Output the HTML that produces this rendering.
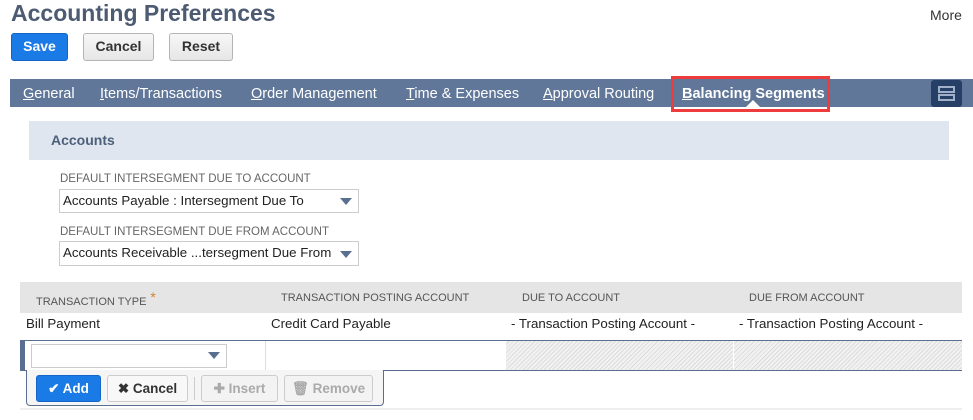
<!DOCTYPE html>
<html><head><style>
*{box-sizing:border-box;margin:0;padding:0}
body{width:973px;height:420px;background:#fff;font-family:"Liberation Sans",sans-serif;position:relative;overflow:hidden;color:#333}
.a{position:absolute;white-space:nowrap}
.btn{position:absolute;border:1px solid #b4b4b4;border-radius:3px;background:linear-gradient(#f7f7f7,#e6e6e6);font-size:14px;font-weight:bold;color:#333;text-align:center;line-height:25px}
.tab{position:absolute;top:86px;font-size:14.5px;color:#fff}
.tab u{text-decoration:underline}
.lbl{position:absolute;font-size:11.5px;color:#666}
.sel{position:absolute;border:1px solid #ccc;background:#fff;font-size:13.3px;color:#222;padding-left:3px;line-height:21px}
.tri{position:absolute;width:0;height:0;border-left:6px solid transparent;border-right:6px solid transparent;border-top:7px solid #5a6f90}
.th{position:absolute;top:292px;font-size:11px;color:#555}
.td{position:absolute;top:316px;font-size:13.3px;color:#222}
.hatch{background:repeating-linear-gradient(135deg,#f2f2f2 0 2px,#dcdcdc 2px 3px)}
.sb{position:absolute;top:375px;height:27px;border:1px solid #ccc;border-radius:3px;background:#f3f3f3;font-size:13.5px;font-weight:bold;line-height:25px;text-align:center}
</style></head><body>
<div class="a" style="left:11px;top:0;font-size:23px;font-weight:bold;color:#4d5b72">Accounting Preferences</div>
<div class="a" style="left:930px;top:7px;font-size:14px;color:#333">More</div>
<div class="btn" style="left:11px;top:33px;width:57px;height:28px;background:#1a7ae6;border-color:#1565c8;color:#fff">Save</div>
<div class="btn" style="left:83px;top:33px;width:71px;height:28px">Cancel</div>
<div class="btn" style="left:169px;top:33px;width:64px;height:28px">Reset</div>
<div class="a" style="left:10px;top:79px;width:963px;height:28px;background:#607799"></div>
<div class="tab" style="left:23px"><u>G</u>eneral</div>
<div class="tab" style="left:100px"><u>I</u>tems/Transactions</div>
<div class="tab" style="left:251px"><u>O</u>rder Management</div>
<div class="tab" style="left:406px"><u>T</u>ime &amp; Expenses</div>
<div class="tab" style="left:543px"><u>A</u>pproval Routing</div>
<div class="tab" style="left:682px;font-weight:bold"><u>B</u>alancing Segments</div>
<div class="a" style="left:746px;top:100px;width:0;height:0;border-left:7px solid transparent;border-right:7px solid transparent;border-bottom:7px solid #fff"></div>
<div class="a" style="left:671px;top:76px;width:159px;height:36px;border:3px solid #ee3b3b"></div>
<div class="a" style="left:931px;top:80px;width:31px;height:27px;background:#263f66;border-radius:3px"></div>
<div class="a" style="left:938px;top:86px;width:17px;height:7px;border:2px solid #9fb0c8"></div>
<div class="a" style="left:938px;top:94px;width:17px;height:7px;border:2px solid #9fb0c8"></div>
<div class="a" style="left:29px;top:121px;width:920px;height:39px;background:#dfe6ef"></div>
<div class="a" style="left:51px;top:132px;font-size:14px;font-weight:bold;color:#4d5f7a">Accounts</div>
<div class="lbl" style="left:60px;top:173px">DEFAULT INTERSEGMENT DUE TO ACCOUNT</div>
<div class="sel" style="left:59px;top:189px;width:300px;height:24px">Accounts Payable : Intersegment Due To</div>
<div class="tri" style="left:340px;top:198px"></div>
<div class="lbl" style="left:60px;top:226px">DEFAULT INTERSEGMENT DUE FROM ACCOUNT</div>
<div class="sel" style="left:59px;top:241px;width:300px;height:25px">Accounts Receivable ...tersegment Due From</div>
<div class="tri" style="left:340px;top:251px"></div>
<div class="a" style="left:20px;top:282px;width:942px;height:31px;background:#e5e5e5"></div>
<div class="th" style="left:36px">TRANSACTION TYPE<span style="color:#d9822b;font-size:14px;position:relative;top:-3px"> *</span></div>
<div class="th" style="left:281px">TRANSACTION POSTING ACCOUNT</div>
<div class="th" style="left:522px">DUE TO ACCOUNT</div>
<div class="th" style="left:749px">DUE FROM ACCOUNT</div>
<div class="td" style="left:26px">Bill Payment</div>
<div class="td" style="left:271px">Credit Card Payable</div>
<div class="td" style="left:511px">- Transaction Posting Account -</div>
<div class="td" style="left:739px">- Transaction Posting Account -</div>
<div class="a" style="left:20px;top:340px;width:942px;height:31px;border-top:1px solid #5a6f90;border-bottom:1px solid #5a6f90;border-left:5px solid #5a6f90"></div>
<div class="a" style="left:265px;top:341px;width:1px;height:29px;background:#ddd"></div>
<div class="a hatch" style="left:506px;top:341px;width:227px;height:29px"></div>
<div class="a hatch" style="left:734px;top:341px;width:228px;height:29px"></div>
<div class="sel" style="left:31px;top:344px;width:196px;height:24px"></div>
<div class="tri" style="left:208px;top:352px"></div>
<div class="a" style="left:26px;top:370px;width:358px;height:36px;border:1px solid #5a6f90;border-top:none;border-radius:0 0 4px 4px;background:#f5f5f5"></div>
<div class="a" style="left:20px;top:408px;width:942px;height:2px;background:#eee"></div>
<div class="sb" style="left:36px;width:65px;background:#1a7ae6;border-color:#1565c8;color:#fff">✔ Add</div>
<div class="sb" style="left:107px;width:81px;background:#f8f8f8;color:#333">✖ Cancel</div>
<div class="a" style="left:194px;top:377px;width:1px;height:23px;background:#ccc"></div>
<div class="sb" style="left:201px;width:77px;color:#aaa">✚ Insert</div>
<div class="sb" style="left:284px;width:89px;color:#aaa">🗑 Remove</div>
</body></html>
